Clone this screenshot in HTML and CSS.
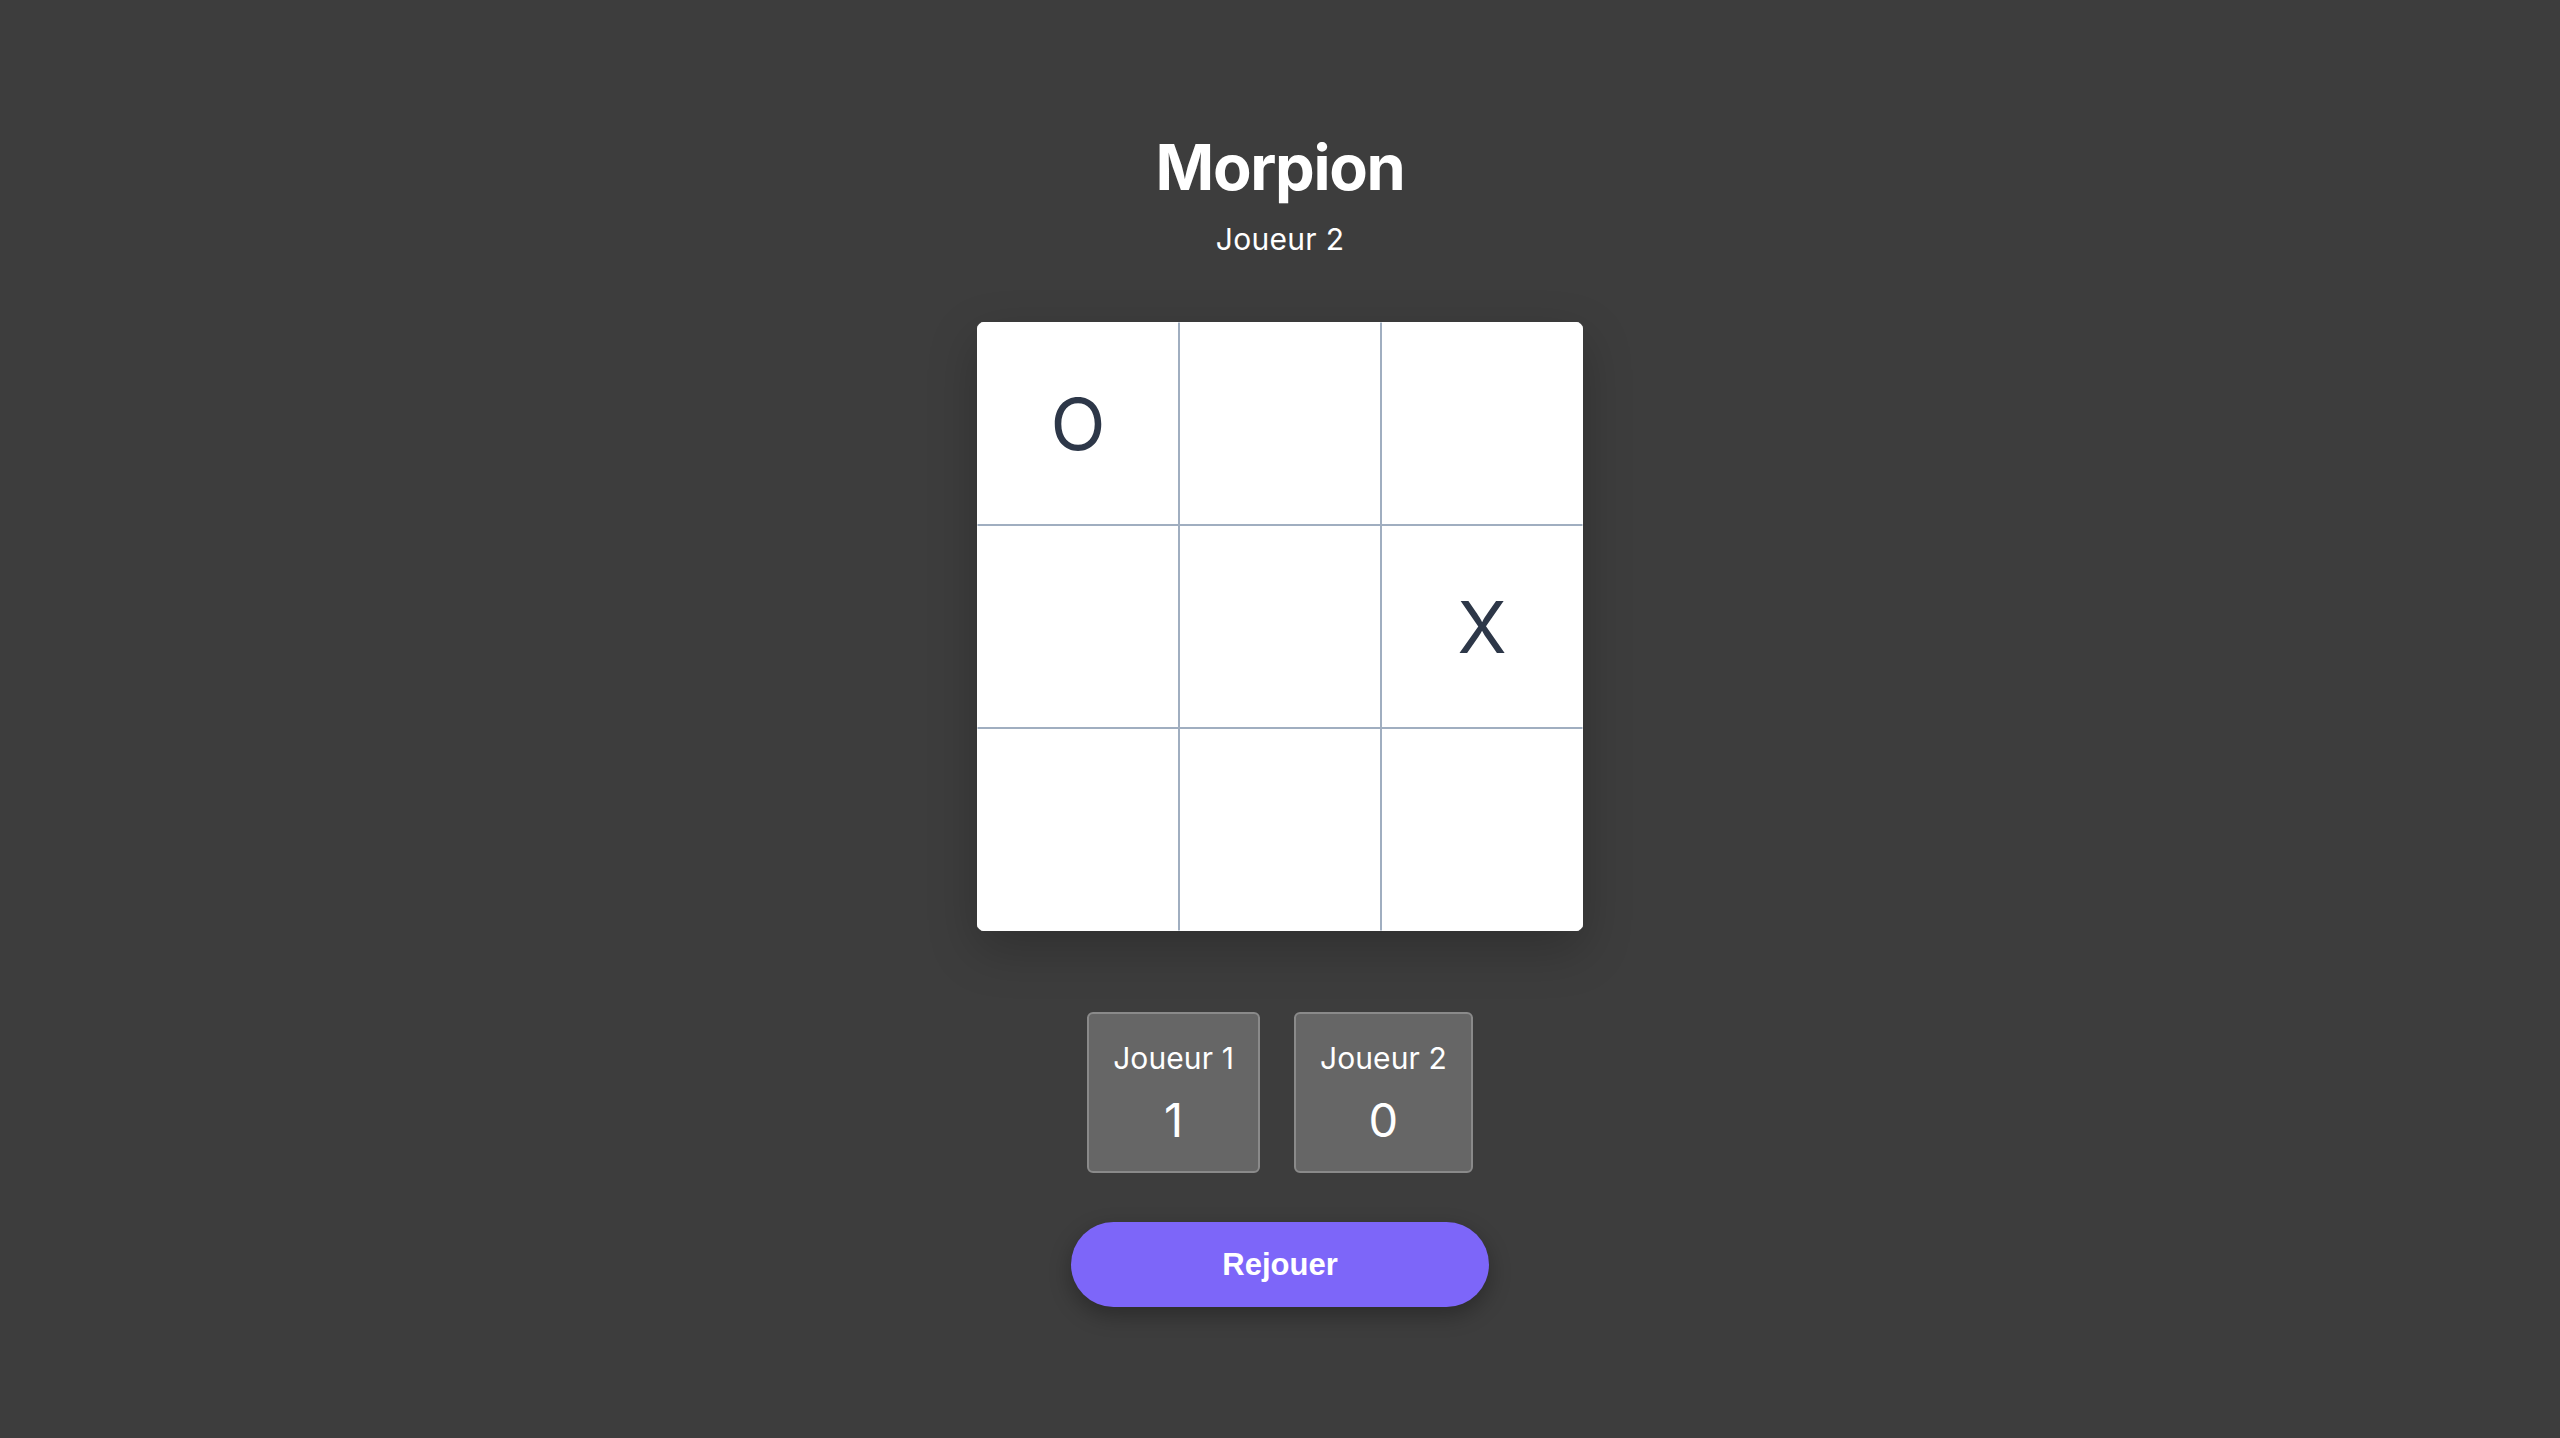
FILE: index.html
```html
<!DOCTYPE html>
<html lang="fr">
<head>
<meta charset="utf-8">
<title>Morpion</title>
<link rel="stylesheet" href="styles.css">
</head>
<body>
<main class="app">
  <h1 class="title">Morpion</h1>
  <p class="turn">Joueur 2</p>
  <div class="board">
    <div class="cell">O</div>
    <div class="cell"></div>
    <div class="cell"></div>
    <div class="cell"></div>
    <div class="cell"></div>
    <div class="cell">X</div>
    <div class="cell"></div>
    <div class="cell"></div>
    <div class="cell"></div>
  </div>
  <div class="scores">
    <div class="score">
      <div class="score-label">Joueur 1</div>
      <div class="score-value">1</div>
    </div>
    <div class="score">
      <div class="score-label">Joueur 2</div>
      <div class="score-value">0</div>
    </div>
  </div>
  <button class="replay">Rejouer</button>
</main>
</body>
</html>
```

FILE: styles.css
```css
html, body {
  margin: 0;
  padding: 0;
  background: #3d3d3d;
  height: 100%;
}
body {
  font-family: Inter, "Noto Sans", sans-serif;
  color: #ffffff;
}
.app {
  display: flex;
  flex-direction: column;
  align-items: center;
  padding-top: 129px;
}
.title {
  margin: 0;
  font-size: 63px;
  line-height: 77px;
  font-weight: 700;
  letter-spacing: -1.3px;
}
.turn {
  margin: 15px 0 0 0;
  font-size: 30px;
  line-height: 36px;
  font-weight: 400;
  letter-spacing: 0.3px;
}
.board {
  margin-top: 65px;
  display: grid;
  grid-template-columns: repeat(3, 202px);
  grid-template-rows: repeat(3, 203px);
  background: #ffffff;
  border-radius: 7px;
  overflow: hidden;
  box-shadow: 0 18px 50px rgba(0, 0, 0, 0.22);
}
.cell {
  border: 1px solid #a0aec0;
  display: flex;
  align-items: center;
  justify-content: center;
  font-size: 72px;
  color: #2d3748;
  line-height: 1;
}
.cell:nth-child(-n+3) { border-top-color: #ffffff; }
.cell:nth-child(n+7) { border-bottom-color: #ffffff; }
.cell:nth-child(3n+1) { border-left-color: #ffffff; }
.cell:nth-child(3n) { border-right-color: #ffffff; }
.scores {
  margin-top: 81px;
  display: flex;
  gap: 34px;
}
.score {
  background: #666666;
  border: 2px solid #8a8a8a;
  border-radius: 6px;
  padding: 26px 24px 23px;
  display: flex;
  flex-direction: column;
  align-items: center;
}
.score-label {
  font-size: 30px;
  line-height: 36px;
  letter-spacing: 0.1px;
}
.score-value {
  margin-top: 16px;
  font-size: 47px;
  line-height: 56px;
}
.replay {
  margin-top: 49px;
  width: 418px;
  height: 85px;
  border: none;
  border-radius: 43px;
  background: #7d66f9;
  color: #ffffff;
  font-family: "Liberation Sans", Arial, sans-serif;
  font-weight: 700;
  font-size: 31px;
  box-shadow: 0 8px 22px rgba(0, 0, 0, 0.3);
  cursor: pointer;
}
```
